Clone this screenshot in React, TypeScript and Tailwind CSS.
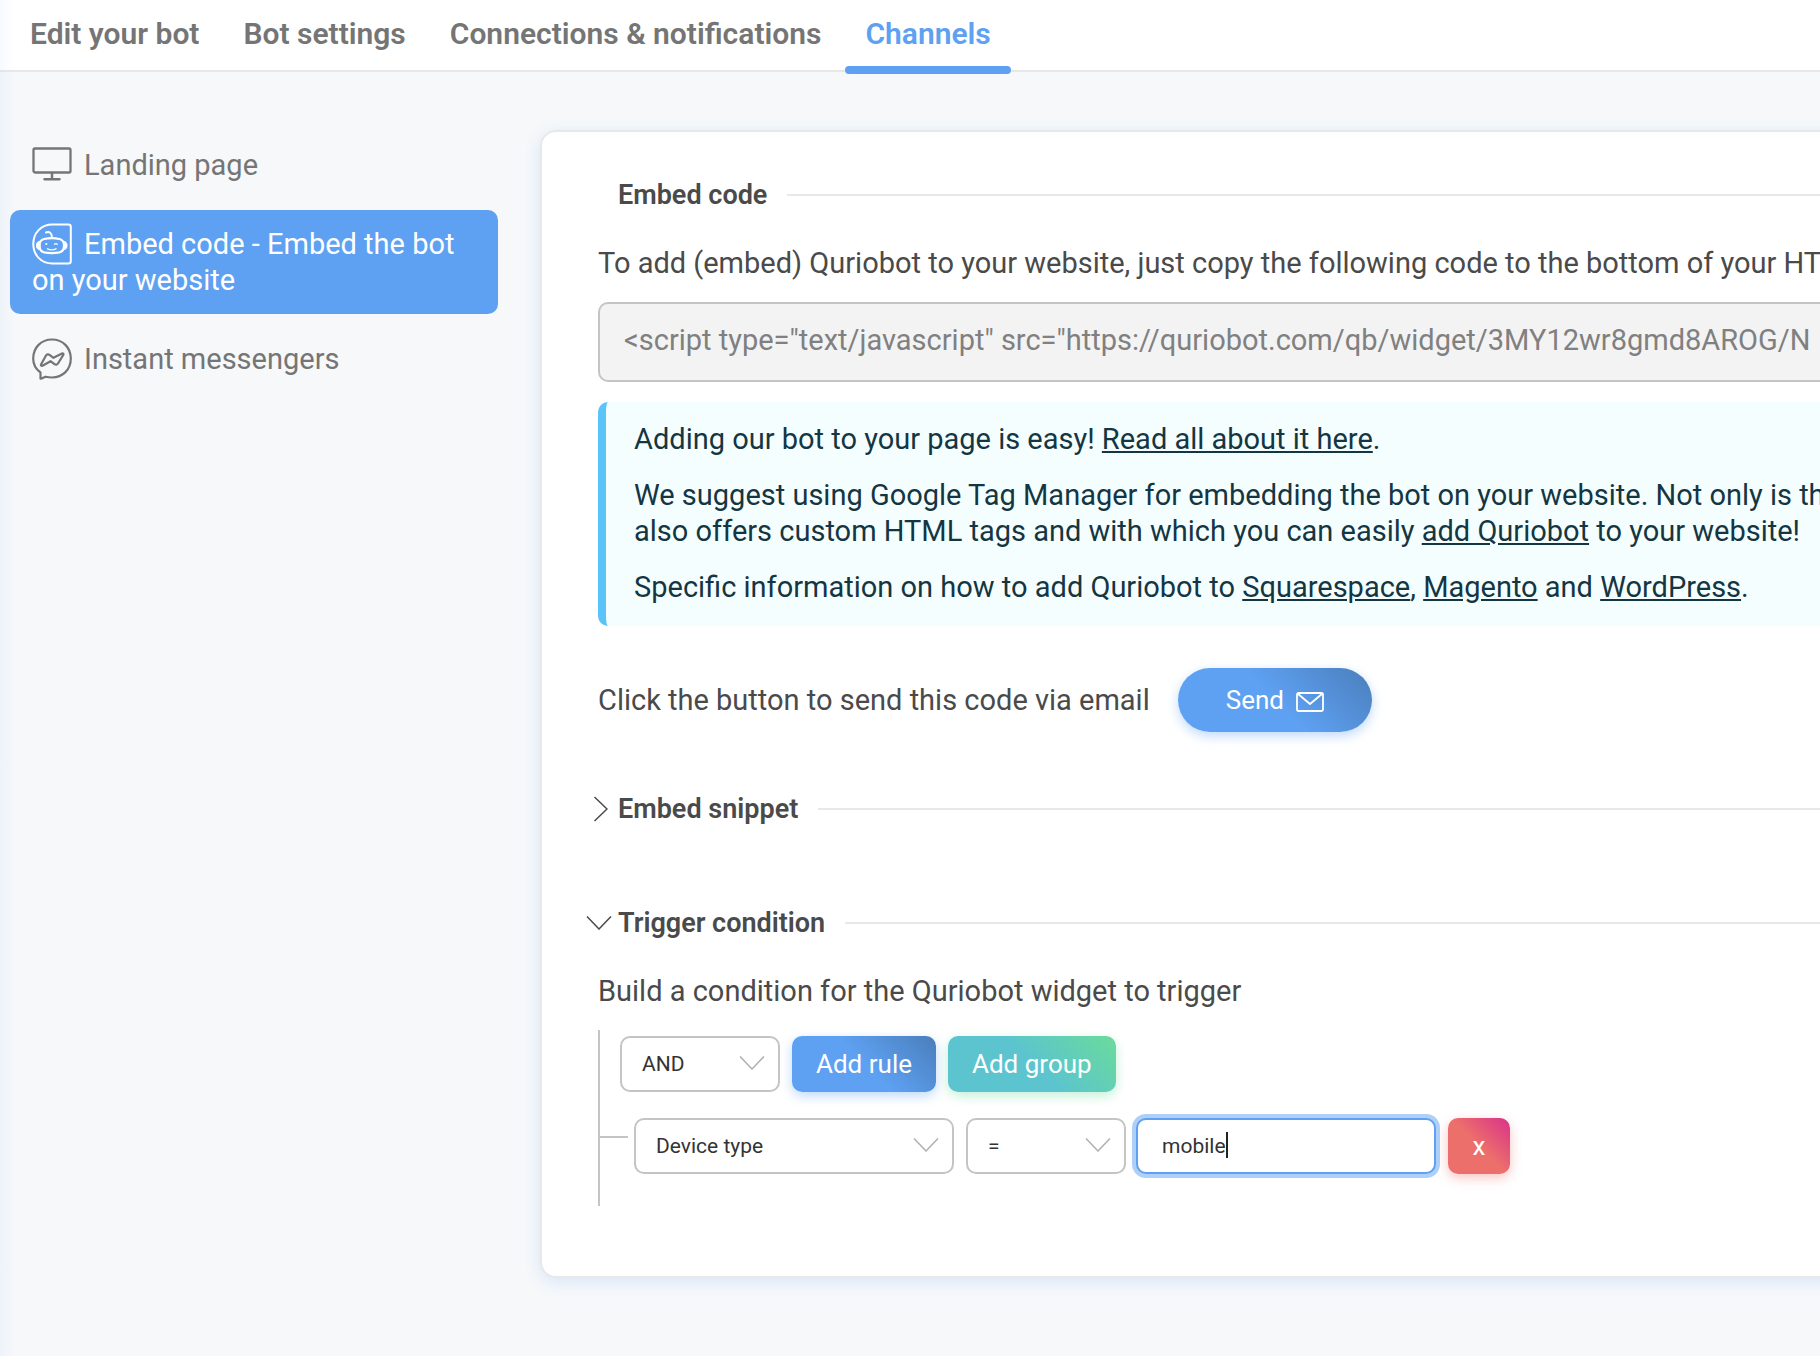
import React, { useState } from 'react';
import clsx from 'clsx';

const tabs = ['Edit your bot', 'Bot settings', 'Connections & notifications', 'Channels'];

const iconClass = 'mr-3 -my-1.5 inline-block h-[42px] w-10 align-[-5px]';

const MonitorIcon = () => (
  <svg viewBox="0 0 40 42" className={iconClass} fill="none" stroke="currentColor" strokeWidth="2.3" strokeLinecap="round">
    <rect x="1.500" y="4.500" width="37" height="24" rx="1.5" />
    <path d="M20 29v6M12.500 35.300h15" strokeWidth="2.500" />
  </svg>
);

const BotIcon = () => (
  <svg viewBox="0 0 40 42" className={iconClass} fill="none" stroke="currentColor" strokeWidth="2" strokeLinecap="round" strokeLinejoin="round">
    <path d="M20.500 1.500H36.500a2.300 2.300 0 0 1 2.300 2.300V38.200a2.300 2.300 0 0 1-2.300 2.300H20.500C9 40.500 1.300 32 1.300 21S9 1.500 20.500 1.500z" />
    <path d="M12 16c5-1 10.500-1 15.500 0 3.500.8 4.500 2.500 4.500 6.500s-1 6-4.500 6.800c-5 1-10.500 1-15.500 0-3.500-.8-4.500-2.800-4.500-6.800s1-5.700 4.500-6.500z" strokeWidth="2.200" />
    <path d="M14 9.500c3-1.500 6 .3 6 5" />
    <path d="M7.500 18.500c-2.500 0-3 2-3 4s.5 4 3 4zM32 18.500c2.500 0 3 2 3 4s-.5 4-3 4z" fill="currentColor" strokeWidth="1" />
    <path d="M15.500 25.800c2.700 1.300 5.800 1.300 8.500 0" strokeWidth="1.300" />
    <circle cx="14.300" cy="21" r="1.100" fill="currentColor" stroke="none" />
    <path d="M22.500 21.200c.9-.6 2-.6 2.800 0" strokeWidth="1.300" />
  </svg>
);

const MessengerIcon = () => (
  <svg viewBox="0 0 40 42" className={iconClass} fill="none" stroke="currentColor" strokeWidth="2.200" strokeLinecap="round" strokeLinejoin="round">
    <path d="M20 1.500c10.800 0 18.800 8 18.800 19S30.800 39.500 20 39.500c-3 0-4.500-.3-6.500-.8-1.500.5-3 1.700-5 2V34.500C3.500 31 1.200 26.500 1.200 20.500c0-11 8-19 18.800-19z" />
    <path d="M9 26.500l5-9c.8-1.300 2.300-1.500 3.500-.6l4 2.900 8.500-4.300c1-.5 2 .3 1.300 1.400L26 25.500c-.8 1.300-2.300 1.500-3.500.6l-4-2.900-8 4.500c-1 .4-2-.2-1.500-1.200z" />
  </svg>
);

const MailIcon = () => (
  <svg viewBox="0 0 28 20" className="mt-1 h-5 w-7" fill="none" stroke="currentColor" strokeWidth="1.800" strokeLinejoin="round">
    <rect x="1" y="1" width="26" height="18" rx="1.500" />
    <path d="M1.500 1.500L14 12 26.500 1.500" />
  </svg>
);

const Chevron = ({ className }: { className?: string }) => (
  <svg viewBox="0 0 26 14" className={clsx('h-[14px] w-[26px]', className)} fill="none" stroke="currentColor" strokeWidth="1.500">
    <path d="M1 0.500L13 13L25 0.500" />
  </svg>
);

const channels = [
  { label: 'Landing page', Icon: MonitorIcon },
  { label: 'Embed code - Embed the bot on your website', Icon: BotIcon, active: true },
  { label: 'Instant messengers', Icon: MessengerIcon },
];

const SectionTitle = ({ children, open }: { children: string; open?: boolean }) => (
  <div className="flex items-center gap-5">
    <h2 className="relative pl-5 text-[27px] leading-9 font-semibold text-[#4a4a4a]">
      {open !== undefined && (
        <Chevron className={clsx('absolute top-[11px] text-[#4a4a4a]', open ? '-left-3' : '-left-[10px] -rotate-90')} />
      )}
      {children}
    </h2>
    <div className="h-[2px] flex-1 bg-[#e8e8e8]" />
  </div>
);

const Select = ({ label, options, className }: { label: string; options: string[]; className: string }) => (
  <div className={clsx('relative h-14', className)}>
    <select aria-label={label} className="h-full w-full appearance-none rounded-[10px] border-2 border-[#c4c4c4] bg-white px-5 text-[21px] text-[#333]">
      {options.map(o => <option key={o}>{o}</option>)}
    </select>
    <Chevron className="pointer-events-none absolute top-5 right-[15px] text-[#b0b0b0]" />
  </div>
);

export default function App() {
  const [value, setValue] = useState('mobile');

  return (
    <div className="relative min-h-screen overflow-hidden bg-[#f6f8fa] font-[Roboto,sans-serif] text-[29px] leading-9 text-[#4a4a4a]">
      <nav className="flex h-[72px] gap-1 border-b-2 border-[#e8e8e8] bg-white pl-[10px]">
        {tabs.map(tab => (
          <a
            key={tab}
            href="#"
            className={clsx('relative px-5 py-4 text-[30px] font-semibold whitespace-nowrap', tab === 'Channels' ? 'text-[#5ea1f2]' : 'text-[#757575]')}
          >
            {tab}
            {tab === 'Channels' && <span className="absolute inset-x-0 -bottom-1 h-2 rounded bg-[#5ea1f2]" />}
          </a>
        ))}
      </nav>

      <div className="flex pt-[58px]">
        <aside className="w-[540px] shrink-0 space-y-[11px] pt-px pr-[42px] pl-[10px]">
          {channels.map(({ label, Icon, active }) => (
            <a
              key={label}
              href="#"
              className={clsx('block rounded-[10px] px-[22px] py-4', active ? 'bg-[#5ea1f2] text-white' : 'text-[#757575]')}
            >
              <Icon />
              {label}
            </a>
          ))}
        </aside>

        <main className="-mr-8 min-w-0 flex-1 rounded-2xl border-2 border-[#e8e8e8] bg-white pt-[45px] pb-[70px] pl-14 shadow-[0_4px_16px_rgba(94,161,242,0.2)]">
          <SectionTitle>Embed code</SectionTitle>
          <p className="mt-8 whitespace-nowrap">
            To add (embed) Quriobot to your website, just copy the following code to the bottom of your HT
          </p>
          <input
            readOnly
            aria-label="Embed code"
            className="mt-[21px] block h-20 w-full rounded-l-[10px] border-2 border-r-0 border-[#c4c4c4] bg-[#f3f3f3] pb-1 pl-6 text-[#808080]"
            value={'<script type="text/javascript" src="https://quriobot.com/qb/widget/3MY12wr8gmd8AROG/N'}
          />
          <div className="mt-5 space-y-5 rounded-l-[10px] border-l-8 border-[#5ac3fa] bg-[#f5feff] pt-[19px] pb-[21px] pl-7 whitespace-nowrap text-[#143642]">
            <p>Adding our bot to your page is easy! <a href="#" className="underline">Read all about it here</a>.</p>
            <p>
              We suggest using Google Tag Manager for embedding the bot on your website. Not only is th<br />
              also offers custom HTML tags and with which you can easily <a href="#" className="underline">add Quriobot</a> to your website!
            </p>
            <p>
              Specific information on how to add Quriobot to <a href="#" className="underline">Squarespace</a>, <a href="#" className="underline">Magento</a> and <a href="#" className="underline">WordPress</a>.
            </p>
          </div>

          <div className="mt-[42px] flex items-center gap-7">
            <p>Click the button to send this code via email</p>
            <button className="flex h-16 items-center gap-3 rounded-full bg-[linear-gradient(45deg,#5ea1f2_50%,#4a7ebb)] px-12 text-[26px] text-white shadow-[0_4px_12px_rgba(94,161,242,0.4)]">
              Send <MailIcon />
            </button>
          </div>

          <div className="mt-[59px]">
            <SectionTitle open={false}>Embed snippet</SectionTitle>
          </div>
          <div className="mt-[78px]">
            <SectionTitle open>Trigger condition</SectionTitle>
          </div>
          <p className="mt-8">Build a condition for the Quriobot widget to trigger</p>

          <div className="mt-[21px] border-l-2 border-[#c4c4c4] pt-[6px] pb-8">
            <div className="flex gap-3 pl-5">
              <Select label="Combinator" options={['AND', 'OR']} className="w-40" />
              <button className="rounded-[10px] bg-[linear-gradient(45deg,#5ea1f2_50%,#4a7ebb)] px-6 text-[26px] text-white shadow-[0_4px_12px_rgba(94,161,242,0.4)]">
                Add rule
              </button>
              <button className="rounded-[10px] bg-[linear-gradient(45deg,#5bc4cf_50%,#6bdb9b)] px-6 text-[26px] text-white shadow-[0_4px_12px_rgba(107,219,155,0.4)]">
                Add group
              </button>
            </div>
            <div className="mt-[26px] flex">
              <div className="mt-[18px] mr-[6px] h-[2px] w-7 bg-[#c4c4c4]" />
              <Select label="Field" options={['Device type', 'Page URL']} className="w-80" />
              <Select label="Operator" options={['=', '!=']} className="ml-3 w-40" />
              <div className="relative ml-[10px] w-[300px]">
                <input
                  aria-label="Value"
                  value={value}
                  onChange={e => setValue(e.target.value)}
                  className="h-14 w-full rounded-[10px] border-2 border-[#5ea1f2] bg-white px-6 text-[21px] text-[#333] ring-4 ring-[#5ea1f2]/50 outline-none"
                />
                <span className="absolute top-[14px] left-[90px] h-[26px] w-[2px] bg-[#222]" />
              </div>
              <button aria-label="Remove rule" className="ml-3 h-14 w-[62px] rounded-[10px] bg-[linear-gradient(45deg,#ec6f6b_50%,#d93289)] text-[26px] text-white shadow-[0_4px_12px_rgba(236,111,107,0.4)]">
                x
              </button>
            </div>
          </div>
        </main>
      </div>
      <div className="pointer-events-none absolute inset-y-0 left-0 w-4 bg-linear-to-r from-[#5ea1f2]/5 to-transparent" />
    </div>
  );
}
